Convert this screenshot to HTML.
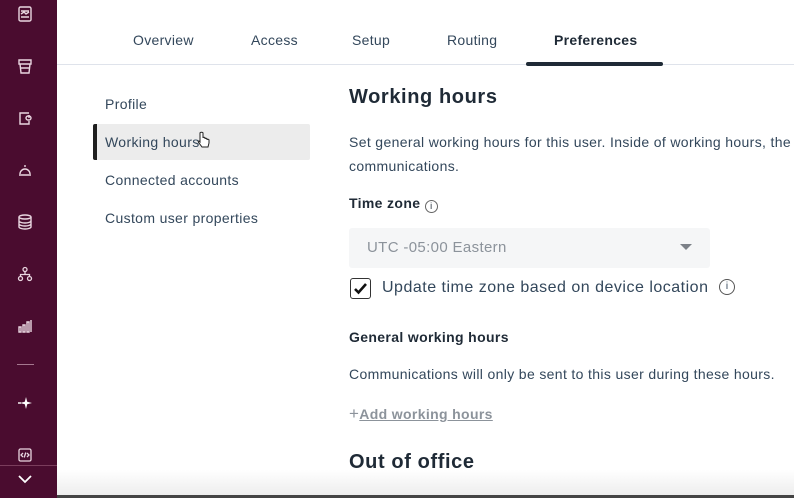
<!DOCTYPE html>
<html><head><style>
*{margin:0;padding:0;box-sizing:border-box}
body{width:794px;height:498px;overflow:hidden;background:#fff;font-family:"Liberation Sans",sans-serif;color:#33475b;position:relative}
.sb{position:absolute;left:0;top:0;width:57px;height:498px;background:#4a0c2f}
.sb svg{position:absolute;left:16px}
.t{position:absolute;font-size:14px;color:#33475b;white-space:nowrap;letter-spacing:0.35px}
.tab{position:absolute;top:32px;font-size:14px;color:#33475b;letter-spacing:0.3px}
</style></head><body>
<div class="sb">
<svg style="top:5px" width="18" height="18" viewBox="0 0 18 18" fill="none" stroke="#e9d6e0" stroke-width="1.4"><rect x="3" y="2" width="12" height="14" rx="1.5"/><path d="M5 6h8M5 9l3-2 2 2 3-2M5 12h8"/></svg>
<svg style="top:57px" width="18" height="18" viewBox="0 0 18 18" fill="none" stroke="#e9d6e0" stroke-width="1.4"><path d="M3 3h12v4H3zM4 7l1 9h8l1-9M4.5 11h9"/></svg>
<svg style="top:109px" width="18" height="18" viewBox="0 0 18 18" fill="none" stroke="#e9d6e0" stroke-width="1.4"><path d="M13 4H4v11h9v-3M13 9v-3"/><rect x="10" y="7" width="5" height="4" rx="2"/></svg>
<svg style="top:161px" width="18" height="18" viewBox="0 0 18 18" fill="none" stroke="#e9d6e0" stroke-width="1.4"><path d="M3 14h12M4 13a5 5 0 0 1 10 0M9 6V4"/></svg>
<svg style="top:213px" width="18" height="18" viewBox="0 0 18 18" fill="none" stroke="#e9d6e0" stroke-width="1.4"><ellipse cx="9" cy="4" rx="6" ry="2"/><path d="M3 4v10c0 1 3 2 6 2s6-1 6-2V4M3 8c0 1 3 2 6 2s6-1 6-2M3 11c0 1 3 2 6 2s6-1 6-2"/></svg>
<svg style="top:265px" width="18" height="18" viewBox="0 0 18 18" fill="none" stroke="#e9d6e0" stroke-width="1.3"><circle cx="9" cy="4.5" r="2"/><circle cx="4.5" cy="13.5" r="2"/><circle cx="13.5" cy="13.5" r="2"/><path d="M9 6.5v3M4.5 11.5v-2h9v2"/></svg>
<svg style="top:317px" width="18" height="18" viewBox="0 0 18 18" fill="none" stroke="#e9d6e0" stroke-width="1.4"><path d="M3 10h2v5H3zM7 8h2v7H7zM11 5h2v10h-2zM15 3v12"/></svg>
<div style="position:absolute;left:17px;top:364px;width:17px;height:1px;background:#a5788f"></div>
<svg style="top:394px" width="18" height="18" viewBox="0 0 18 18"><path d="M10 3l1.2 4.8L16 9l-4.8 1.2L10 15l-1.2-4.8L4 9l4.8-1.2z" fill="#fff"/><path d="M2 9h3" stroke="#fff" stroke-width="1.4"/></svg>
<svg style="top:446px" width="18" height="18" viewBox="0 0 18 18" fill="none" stroke="#e9d6e0" stroke-width="1.3"><rect x="3" y="3" width="12" height="12" rx="1.5"/><path d="M7 7l-2 2 2 2M11 7l2 2-2 2M9.8 6.5l-1.6 5"/></svg>
<div style="position:absolute;left:0;top:465px;width:57px;height:1px;background:#7a3d5c"></div>
<svg style="top:472px" width="18" height="14" viewBox="0 0 18 14" fill="none" stroke="#fff" stroke-width="1.8"><path d="M3 4l6 6 6-6"/></svg>
</div>
<div style="position:absolute;left:57px;top:64px;width:737px;height:1px;background:#dfe3eb"></div>
<div class="tab" style="left:133px">Overview</div>
<div class="tab" style="left:251px">Access</div>
<div class="tab" style="left:352px">Setup</div>
<div class="tab" style="left:447px">Routing</div>
<div class="tab" style="left:554px;font-weight:bold;color:#1f2a36">Preferences</div>
<div style="position:absolute;left:526px;top:62px;width:137px;height:4px;background:#1f2a36;border-radius:2px"></div>
<div class="t" style="left:105px;top:96px">Profile</div>
<div style="position:absolute;left:93px;top:124px;width:217px;height:36px;background:#ececec;border-radius:2px;border-left:4px solid #1f1f1f"></div>
<div class="t" style="left:105px;top:134px">Working hours</div>
<svg style="position:absolute;left:197px;top:131px" width="14" height="18" viewBox="0 0 14 18"><path d="M3 2v9l-1-1c-1 0-1 1 0 2l3 4h6l1-4V9c0-1-2-1-2 0V8c0-1-2-1-2 0V7c0-1-2-1-2 0V2c0-1-3-1-3 0z" fill="#fff" stroke="#222" stroke-width="1"/></svg>
<div class="t" style="left:105px;top:172px">Connected accounts</div>
<div class="t" style="left:105px;top:210px">Custom user properties</div>
<div class="t" style="left:349px;top:86px;font-size:20px;font-weight:bold;color:#1f2a36;letter-spacing:0.6px">Working hours</div>
<div class="t" style="left:349px;top:130px;line-height:24px">Set general working hours for this user. Inside of working hours, the<br>communications.</div>
<div class="t" style="left:349px;top:195px;font-weight:bold;color:#1f2a36">Time zone <span style="display:inline-block;width:13px;height:13px;border:1px solid #666;border-radius:50%;font-size:9px;text-align:center;line-height:11px;font-weight:normal;vertical-align:-1px;letter-spacing:0">i</span></div>
<div style="position:absolute;left:349px;top:228px;width:361px;height:40px;background:#f5f6f7;border-radius:3px"></div>
<div class="t" style="left:367px;top:239px;font-size:15px;color:#8c939b">UTC -05:00 Eastern</div>
<div style="position:absolute;left:680px;top:244px;border-left:6px solid transparent;border-right:6px solid transparent;border-top:6px solid #7c8188"></div>
<div style="position:absolute;left:350px;top:278px;width:21px;height:21px;border:1.5px solid #333;border-radius:3px"></div>
<svg style="position:absolute;left:352px;top:280px" width="17" height="17" viewBox="0 0 17 17"><path d="M3 9l3.5 3.5L14 4" fill="none" stroke="#111" stroke-width="2.6"/></svg>
<div class="t" style="left:382px;top:279px;font-size:16px;letter-spacing:0.5px">Update time zone based on device location</div>
<div style="position:absolute;left:719px;top:279px;width:16px;height:16px;border:1px solid #555;border-radius:50%;font-size:10px;text-align:center;line-height:14px">i</div>
<div class="t" style="left:349px;top:329px;font-weight:bold;color:#1f2a36">General working hours</div>
<div class="t" style="left:349px;top:366px">Communications will only be sent to this user during these hours.</div>
<div class="t" style="left:349px;top:404px;color:#8c939b;font-weight:bold"><span style="font-weight:normal;font-size:17px">+</span><span style="text-decoration:underline">Add working hours</span></div>
<div class="t" style="left:349px;top:451px;font-size:20px;font-weight:bold;color:#1f2a36;letter-spacing:0.6px">Out of office</div>
<div style="position:absolute;left:57px;top:470px;width:737px;height:28px;background:linear-gradient(#fff0,#ebebeb)"></div>
<div style="position:absolute;left:57px;top:495px;width:737px;height:3px;background:#444"></div>
</body></html>
